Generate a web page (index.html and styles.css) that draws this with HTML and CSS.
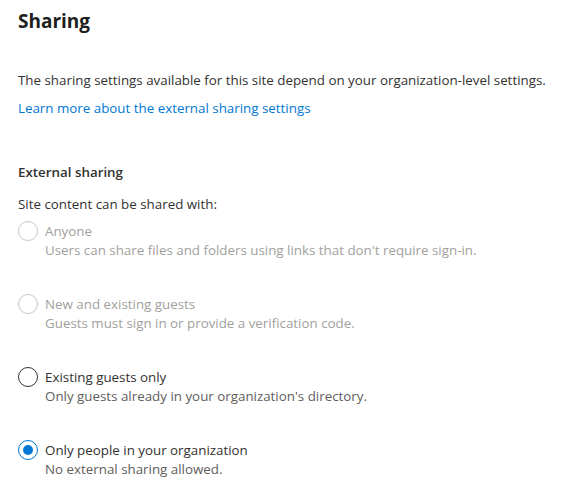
FILE: index.html
```html
<!DOCTYPE html>
<html>
<head>
<meta charset="utf-8">
<link rel="stylesheet" href="styles.css">
</head>
<body>
<div class="page">
  <h1 class="title">Sharing</h1>
  <p class="desc">The sharing settings available for this site depend on your organization-level settings.</p>
  <a class="link" href="#">Learn more about the external sharing settings</a>
  <h2 class="section">External sharing</h2>
  <div class="group-label">Site content can be shared with:</div>
  <div class="options">
    <div class="option disabled">
      <span class="radio"></span>
      <div class="texts">
        <div class="label">Anyone</div>
        <div class="sub">Users can share files and folders using links that don't require sign-in.</div>
      </div>
    </div>
    <div class="option disabled">
      <span class="radio"></span>
      <div class="texts">
        <div class="label">New and existing guests</div>
        <div class="sub">Guests must sign in or provide a verification code.</div>
      </div>
    </div>
    <div class="option">
      <span class="radio"></span>
      <div class="texts">
        <div class="label">Existing guests only</div>
        <div class="sub">Only guests already in your organization's directory.</div>
      </div>
    </div>
    <div class="option checked">
      <span class="radio"></span>
      <div class="texts">
        <div class="label">Only people in your organization</div>
        <div class="sub">No external sharing allowed.</div>
      </div>
    </div>
  </div>
</div>
</body>
</html>
```
FILE: styles.css
```css
html, body {
  margin: 0;
  padding: 0;
  background: #ffffff;
}
body {
  font-family: "Open Sans", "Noto Sans", sans-serif;
  color: #323130;
  font-size: 13.35px;
}
.page {
  padding: 8px 18px 0 18px;
}
.title {
  margin: 0;
  font-size: 19px;
  font-weight: 700;
  line-height: 26px;
  color: #201f1e;
}
.desc {
  margin: 36px 0 0 0;
  line-height: 20px;
}
.link {
  display: block;
  margin-top: 8px;
  color: #0078d4;
  text-decoration: none;
  line-height: 20px;
}
.section {
  margin: 44px 0 0 0;
  font-size: 13.35px;
  font-weight: 600;
  line-height: 20px;
}
.group-label {
  margin-top: 12px;
  line-height: 20px;
}
.options {
  display: flex;
  flex-direction: column;
  gap: 35px;
  margin-top: 7px;
}
.option {
  display: flex;
  align-items: flex-start;
  gap: 7px;
}
.radio {
  box-sizing: border-box;
  width: 20px;
  height: 20px;
  border-radius: 50%;
  border: 1px solid #323130;
  flex: none;
  position: relative;
}
.texts {
  line-height: 18px;
  margin-top: 1px;
}
.sub {
  color: #605e5c;
  margin-top: 1px;
}
.disabled .radio {
  border-color: #c8c6c4;
}
.disabled .label,
.disabled .sub {
  color: #a19f9d;
}
.checked .radio {
  border-color: #0078d4;
}
.checked .radio::after {
  content: "";
  position: absolute;
  left: 4px;
  top: 4px;
  width: 10px;
  height: 10px;
  border-radius: 50%;
  background: #0078d4;
}
```
